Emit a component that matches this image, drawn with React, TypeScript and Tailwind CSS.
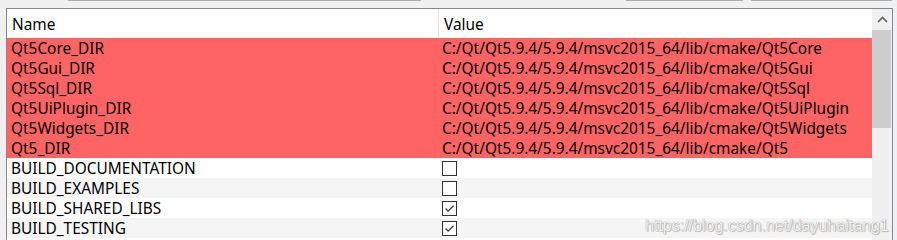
import React from "react";

type Row = { name: string; value?: string; check?: boolean; red?: boolean };

const rows: Row[] = [
  { name: "Qt5Core_DIR", value: "C:/Qt/Qt5.9.4/5.9.4/msvc2015_64/lib/cmake/Qt5Core", red: true },
  { name: "Qt5Gui_DIR", value: "C:/Qt/Qt5.9.4/5.9.4/msvc2015_64/lib/cmake/Qt5Gui", red: true },
  { name: "Qt5Sql_DIR", value: "C:/Qt/Qt5.9.4/5.9.4/msvc2015_64/lib/cmake/Qt5Sql", red: true },
  { name: "Qt5UiPlugin_DIR", value: "C:/Qt/Qt5.9.4/5.9.4/msvc2015_64/lib/cmake/Qt5UiPlugin", red: true },
  { name: "Qt5Widgets_DIR", value: "C:/Qt/Qt5.9.4/5.9.4/msvc2015_64/lib/cmake/Qt5Widgets", red: true },
  { name: "Qt5_DIR", value: "C:/Qt/Qt5.9.4/5.9.4/msvc2015_64/lib/cmake/Qt5", red: true },
  { name: "BUILD_DOCUMENTATION", check: false },
  { name: "BUILD_EXAMPLES", check: false },
  { name: "BUILD_SHARED_LIBS", check: true },
  { name: "BUILD_TESTING", check: true },
];

function Checkbox({ checked }: { checked: boolean }) {
  return (
    <div className="w-[15px] h-[15px] border border-[#333333] bg-white flex items-center justify-center">
      {checked && (
        <svg width="11" height="11" viewBox="0 0 11 11">
          <path d="M1.5 5.5 L4.2 8 L9.5 2.8" fill="none" stroke="#444" strokeWidth="1.3" />
        </svg>
      )}
    </div>
  );
}

export default function App() {
  return (
    <div className="w-[897px] h-[240px] bg-[#f0f0f0] relative overflow-hidden font-['Noto_Sans',sans-serif] text-[15.4px] text-black">
      <div className="h-[8px] flex items-start">
        <div className="ml-[68px] w-[353px] h-px bg-[#adadad]" />
        <div className="ml-[205px] w-[117px] h-px bg-[#adadad]" />
        <div className="ml-[8px] w-[141px] h-px bg-[#adadad]" />
      </div>
      <div className="ml-[6px] w-[887px] h-[240px] border border-[#828790] bg-white flex">
        <div className="w-[865px] flex flex-col">
          <div className="h-[29px] flex bg-white">
            <div className="w-[432px] border-r border-[#e5e5e5] pl-[5px] pt-[3px] flex items-center leading-none">Name</div>
            <div className="flex-1 pl-[5px] pt-[3px] flex items-center leading-none">Value</div>
          </div>
          {rows.map((r, i) => (
            <div
              key={r.name}
              className={
                "h-[20px] flex items-center leading-none " +
                (r.red ? "bg-[#ff6464]" : i % 2 === 1 ? "bg-[#f5f5f5]" : "bg-white")
              }
            >
              <div className="w-[432px] pl-[4px] pt-[2px] whitespace-nowrap">{r.name}</div>
              <div className="flex-1 pl-[3px] whitespace-nowrap flex items-center">
                {r.value !== undefined ? <span className="pt-[2px]">{r.value}</span> : <Checkbox checked={!!r.check} />}
              </div>
            </div>
          ))}
        </div>
        <div className="w-[20px] bg-[#f0f0f0] flex flex-col">
          <div className="h-[21px] flex items-center justify-center">
            <svg width="11" height="7" viewBox="0 0 11 7">
              <path d="M1 6 L5.5 1.5 L10 6" fill="none" stroke="#606060" strokeWidth="1.6" />
            </svg>
          </div>
          <div className="h-[98px] w-[19px] bg-[#cdcdcd]" />
        </div>
      </div>
      <div className="absolute left-[645px] top-[218px] font-['Liberation_Sans',sans-serif] text-[16px] leading-none text-[#f2f2f2] [text-shadow:0_0_1px_rgba(0,0,0,0.45),1px_1px_1px_rgba(0,0,0,0.2)] whitespace-nowrap">
        https://blog.csdn.net/dayuhaitang1
      </div>
    </div>
  );
}
